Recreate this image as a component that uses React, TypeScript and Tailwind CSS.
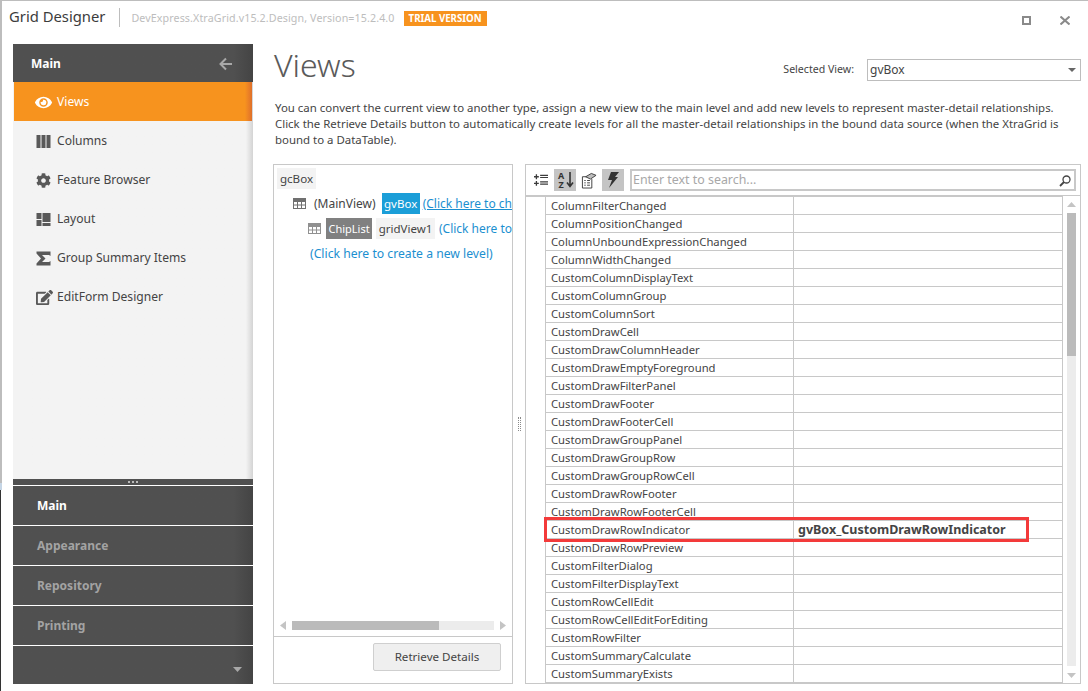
import { FaCog, FaEdit, FaEye } from 'react-icons/fa'

const NAV = ['Views', 'Columns', 'Feature Browser', 'Layout', 'Group Summary Items', 'EditForm Designer']
const GROUPS = ['Main', 'Appearance', 'Repository', 'Printing']
const EVENTS = [
  'ColumnFilterChanged',
  'ColumnPositionChanged',
  'ColumnUnboundExpressionChanged',
  'ColumnWidthChanged',
  'CustomColumnDisplayText',
  'CustomColumnGroup',
  'CustomColumnSort',
  'CustomDrawCell',
  'CustomDrawColumnHeader',
  'CustomDrawEmptyForeground',
  'CustomDrawFilterPanel',
  'CustomDrawFooter',
  'CustomDrawFooterCell',
  'CustomDrawGroupPanel',
  'CustomDrawGroupRow',
  'CustomDrawGroupRowCell',
  'CustomDrawRowFooter',
  'CustomDrawRowFooterCell',
  'CustomDrawRowIndicator',
  'CustomDrawRowPreview',
  'CustomFilterDialog',
  'CustomFilterDisplayText',
  'CustomRowCellEdit',
  'CustomRowCellEditForEditing',
  'CustomRowFilter',
  'CustomSummaryCalculate',
  'CustomSummaryExists',
]

function NavIcon({ name }: { name: string }) {
  if (name === 'Views') return <FaEye className="h-[17px] w-[17px] text-white" />
  if (name === 'Feature Browser') return <FaCog className="ml-[1px] h-[15px] w-[15px] text-[#595959]" />
  if (name === 'EditForm Designer') return <FaEdit className="ml-[1px] h-[17px] w-[17px] text-[#595959]" />
  if (name === 'Columns')
    return (
      <svg className="ml-[1px]" width="15" height="15" viewBox="0 0 15 15" fill="#595959">
        <rect x="0.5" y="1" width="4" height="13" />
        <rect x="5.5" y="1" width="4" height="13" />
        <rect x="10.5" y="1" width="4" height="13" />
      </svg>
    )
  if (name === 'Layout')
    return (
      <svg className="ml-[1px]" width="15" height="15" viewBox="0 0 15 15" fill="#595959">
        <rect x="0.5" y="1" width="5" height="6" />
        <rect x="0.5" y="8" width="5" height="6" />
        <rect x="6.5" y="1" width="8" height="9" />
        <rect x="6.5" y="11" width="8" height="3" />
      </svg>
    )
  return (
    <svg className="ml-[1px]" width="15" height="15" viewBox="0 0 15 15" fill="#595959">
      <path d="M0.5 0.5H14.5V5L13 4H6L9.5 7.5L6 11H13L14.5 10V14.5H0.5V12.5L5 7.5L0.5 2.5Z" />
    </svg>
  )
}

function GridIcon({ className }: { className?: string }) {
  return (
    <svg className={className} width="13" height="11" viewBox="0 0 13 11" fill="none" stroke="currentColor">
      <rect x="0.5" y="0.5" width="12" height="10" fill="#fff" />
      <path d="M0.5 3.5H12.5M0.5 7H12.5M4.5 0.5V10.5M8.5 0.5V10.5" />
      <rect x="0" y="0" width="13" height="3" fill="currentColor" stroke="none" />
    </svg>
  )
}

function Sidebar() {
  return (
    <aside className="flex h-[640px] w-[240px] shrink-0 flex-col">
      <div className="flex h-[38px] items-center justify-between bg-[#505050] bg-gradient-to-r from-[#505050] from-[92%] to-[#444444] pl-[18px] pr-[20px] pt-[1px]">
        <span className="text-[12px] font-bold text-white">Main</span>
        <svg width="14" height="14" viewBox="0 0 14 14" fill="none" stroke="#a8a8a8" strokeWidth="2">
          <path d="M13 7H2M7 1.5L1.5 7L7 12.5" />
        </svg>
      </div>
      <div className="flex flex-1 flex-col bg-[#f3f3f3] bg-gradient-to-r from-[#f3f3f3] from-[97%] to-[#d4d4d4] px-[1px]">
        {NAV.map((n) => (
          <div
            key={n}
            className={
              n === 'Views'
                ? 'flex h-[39px] items-center bg-[#f7931e] bg-gradient-to-r from-[#f7931e] from-[97%] to-[#df6f2a] pl-[21px] pt-[1px] text-[12.1px] text-white'
                : 'flex h-[39px] items-center pl-[21px] pt-[1px] text-[12.1px] text-[#444444]'
            }
          >
            <span className="flex w-[22px] items-center">
              <NavIcon name={n} />
            </span>
            {n}
          </div>
        ))}
      </div>
      <div className="flex h-[6px] items-center justify-center gap-[2px] bg-[#505050]">
        <span className="h-[2px] w-[2px] bg-[#bbbbbb]" />
        <span className="h-[2px] w-[2px] bg-[#bbbbbb]" />
        <span className="h-[2px] w-[2px] bg-[#bbbbbb]" />
      </div>
      {GROUPS.map((g, i) => (
        <div
          key={g}
          className="flex h-[40px] items-center border-t border-white bg-[#505050] bg-gradient-to-r from-[#505050] from-[92%] to-[#444444] pl-[24px]"
        >
          <span className={i === 0 ? 'text-[12px] font-bold text-white' : 'text-[12px] font-bold text-[#a3a3a3]'}>{g}</span>
        </div>
      ))}
      <div className="flex h-[39px] items-center justify-end border-t border-white bg-[#505050] bg-gradient-to-r from-[#505050] from-[92%] to-[#444444] pr-[11px] pt-[8px]">
        <svg width="9" height="5" viewBox="0 0 9 5" fill="#a8a8a8">
          <path d="M0 0H9L4.5 5Z" />
        </svg>
      </div>
    </aside>
  )
}

function LevelTree() {
  return (
    <div className="flex w-[240px] shrink-0 flex-col border border-[#c8c8c8] bg-white">
      <div className="flex flex-1 flex-col gap-[4px] overflow-hidden pl-[3px] pt-[3px] text-[12px] text-[#444444]">
        <div className="flex h-[21px] items-center">
          <span className="w-[39px] bg-[#f3f3f3] text-center text-[11.6px] leading-[21px]">gcBox</span>
        </div>
        <div className="flex h-[21px] items-center whitespace-nowrap pl-[16px]">
          <GridIcon className="mr-[8px] shrink-0 text-[#707070]" />
          <span>(MainView)</span>
          <span className="ml-[6px] w-[39px] bg-[#1b9ed8] text-center text-[11.5px] leading-[21px] text-white">gvBox</span>
          <span className="ml-[3px] text-[#1b8fd0] underline">(Click here to ch</span>
        </div>
        <div className="flex h-[21px] items-center whitespace-nowrap pl-[31px]">
          <GridIcon className="mr-[5px] shrink-0 text-[#909090]" />
          <span className="w-[47px] bg-[#808080] text-center text-[11px] leading-[21px] text-white">ChipList</span>
          <span className="ml-[4px] w-[60px] bg-[#f3f3f3] text-center text-[11.5px] leading-[21px]">gridView1</span>
          <span className="ml-[4px] text-[#1b8fd0]">(Click here to</span>
        </div>
        <div className="mt-[1px] flex h-[21px] items-center pl-[33px] text-[12.2px] text-[#1b8fd0]">(Click here to create a new level)</div>
      </div>
      <div className="flex h-[21px] items-center px-[6px]">
        <svg width="6" height="9" viewBox="0 0 6 9" fill="#c4c4c4">
          <path d="M6 0V9L0 4.5Z" />
        </svg>
        <div className="mx-[6px] h-[9px] flex-1 bg-[#ececec]">
          <div className="h-full w-[147px] bg-[#bbbbbb]" />
        </div>
        <svg width="6" height="9" viewBox="0 0 6 9" fill="#c4c4c4">
          <path d="M0 0V9L6 4.5Z" />
        </svg>
      </div>
      <div className="flex h-[47px] items-start justify-end border-t border-[#c8c8c8] pr-[11px] pt-[6px]">
        <button className="h-[28px] w-[128px] rounded-[2px] border border-[#cfcfcf] bg-[#efefef] text-[11.6px] text-[#444444]">
          Retrieve Details
        </button>
      </div>
    </div>
  )
}

function Toolbar() {
  return (
    <div className="flex h-[31px] shrink-0 items-center border-b border-[#c8c8c8] pl-[8px] pr-[4px]">
      <svg width="14" height="14" viewBox="0 0 16 14" fill="#3c3c3c">
        <path d="M0 2.5H2V0.5H3.5V2.5H5.5V4H3.5V6H2V4H0ZM0 10H2V8H3.5V10H5.5V11.5H3.5V13.5H2V11.5H0ZM7 1H16V2.3H7ZM7 3.5H16V4.8H7ZM7 8.5H16V9.8H7ZM7 11H16V12.3H7Z" />
      </svg>
      <div className="ml-[6px] flex h-[22px] w-[22px] items-center justify-center bg-[#c4c4c4]">
        <span className="flex w-[9px] flex-col text-center text-[9px] font-bold leading-[9px] text-[#333333]">
          <span>A</span>
          <span>Z</span>
        </span>
        <svg width="8" height="16" viewBox="0 0 8 16" fill="none" stroke="#333333" strokeWidth="1.6">
          <path d="M4 0V14M1 10.5L4 14.5L7 10.5" />
        </svg>
      </div>
      <svg className="ml-[5px]" width="16" height="17" viewBox="0 0 17 17" fill="none" stroke="#3c3c3c">
        <path d="M1.5 4.5H6M11.5 7V16.5H1.5V4.5" />
        <path d="M3.5 8.5H5M6.5 8.5H9.5M3.5 11H5M6.5 11H9.5M3.5 13.5H5M6.5 13.5H9.5" />
        <path d="M5 4.5L11 1L16 3L10 7Z" fill="#bdbdbd" />
      </svg>
      <div className="ml-[5px] flex h-[22px] w-[22px] items-center justify-center bg-[#c4c4c4]">
        <svg width="12" height="16" viewBox="0 0 12 16" fill="#333333">
          <path d="M4 0H12L8 5H11L2 16L5 8H1Z" />
        </svg>
      </div>
      <div className="ml-[6px] flex h-[22px] flex-1 items-center justify-between border-2 border-[#c8c8c8] pl-[1px] pr-[3px] pt-[1px] text-[12.4px] text-[#a8a8a8]">
        Enter text to search...
        <svg width="12" height="12" viewBox="0 0 12 12" fill="none" stroke="#444444" strokeWidth="1.3">
          <circle cx="7.5" cy="4.5" r="3.5" />
          <path d="M5 7L1 11" strokeWidth="1.8" />
        </svg>
      </div>
    </div>
  )
}

function EventGrid() {
  return (
    <div className="relative flex w-[556px] shrink-0 flex-col border border-[#c8c8c8] bg-white">
      <Toolbar />
      <div className="flex min-h-0 flex-1">
        <div className="flex-1 border-t border-[#c8c8c8] pl-[19px]">
          {EVENTS.map((e) => (
            <div key={e} className="flex h-[18px] border-b border-[#c8c8c8] text-[11.25px] leading-[17px] text-[#444444]">
              <div className="w-[249px] shrink-0 border-x border-[#c8c8c8] pl-[5px]">{e}</div>
              <div className="flex-1 pl-[4px] text-[12.5px] font-bold">{e === 'CustomDrawRowIndicator' ? 'gvBox_CustomDrawRowIndicator' : ''}</div>
            </div>
          ))}
        </div>
        <div className="flex w-[18px] shrink-0 flex-col items-center border-l border-[#c8c8c8] pb-[5px] pt-[6px]">
          <svg width="9" height="5" viewBox="0 0 9 5" fill="#c4c4c4">
            <path d="M0 5H9L4.5 0Z" />
          </svg>
          <div className="mb-[7px] mt-[6px] w-[9px] flex-1 bg-[#ececec]">
            <div className="h-[143px] w-full bg-[#bbbbbb]" />
          </div>
          <svg width="9" height="5" viewBox="0 0 9 5" fill="#c4c4c4">
            <path d="M0 0H9L4.5 5Z" />
          </svg>
        </div>
      </div>
      {/* red callout over the selected row */}
      <div className="absolute left-[18px] top-[352px] h-[25px] w-[485px] border-[3px] border-[#f33a3a]" />
    </div>
  )
}

export default function App() {
  return (
    <div className="flex h-[691px] w-[1088px] overflow-hidden bg-white" style={{ fontFamily: '"Noto Sans", "Liberation Sans", sans-serif' }}>
      {/* window edge, the dark part is whatever sits behind the dialog */}
      <div className="flex w-[2px] shrink-0 flex-col">
        <div className="h-[483px] bg-[#bdbdbd]" />
        <div className="h-[7px] bg-[#c5d5e5]" />
        <div className="w-[1px] flex-1 bg-[#333333]" />
      </div>
      <div className="flex min-w-0 flex-1 flex-col border-t border-[#bdbdbd]">
        <header className="flex h-[35px] shrink-0 items-center pl-[7px] pr-[18px]">
          <span className="mb-[4px] text-[14.8px] text-[#3c3c3c]">Grid Designer</span>
          <span className="mb-[2px] ml-[14px] h-[19px] w-[1px] bg-[#bdbdbd]" />
          <span className="ml-[11px] text-[10.7px] tracking-[0.1px] text-[#bdbdbd]">DevExpress.XtraGrid.v15.2.Design, Version=15.2.4.0</span>
          <span className="ml-[9px] bg-[#f7931e] px-[5px] text-[9.7px] font-bold leading-[15px] text-white">TRIAL VERSION</span>
          <span className="ml-auto mt-[4px] h-[9px] w-[9px] border-2 border-[#8a8a8a]" />
          <svg className="ml-[29px] mt-[4px]" width="10" height="9" viewBox="0 0 10 9" fill="none" stroke="#8a8a8a" strokeWidth="2">
            <path d="M0.5 0.5L9.5 8.5M9.5 0.5L0.5 8.5" />
          </svg>
        </header>
        <div className="flex pl-[11px] pt-[8px]">
          <Sidebar />
          <main className="ml-[20px] flex h-[640px] w-[808px] flex-col">
            <div className="flex h-[56px] shrink-0 items-start justify-between pl-[1px] pt-[1px]">
              <h1 className="text-[32px] font-light leading-[40px] text-[#5a5a5a]">Views</h1>
              <div className="flex items-center pt-[14px] text-[10.6px] text-[#444444]">
                <span>Selected View:</span>
                <div className="ml-[13px] flex h-[22px] w-[214px] items-center justify-between border border-[#bdbdbd] pl-[2px] pr-[4px] text-[12px]">
                  gvBox
                  <svg width="8" height="4" viewBox="0 0 8 4" fill="#666666">
                    <path d="M0 0H8L4 4Z" />
                  </svg>
                </div>
              </div>
            </div>
            <p className="h-[64px] shrink-0 pl-[2px] text-[11.43px] leading-[16px] text-[#444444]">
              You can convert the current view to another type, assign a new view to the main level and add new levels to represent master-detail relationships. Click the Retrieve Details button to automatically create levels for all the master-detail relationships in the bound data source (when the XtraGrid is bound to a DataTable).
            </p>
            <div className="flex min-h-0 flex-1">
              <LevelTree />
              <div className="flex w-[12px] shrink-0 items-center justify-center">
                <span className="h-[14px] w-[3px] border-x border-dotted border-[#8a8a8a]" />
              </div>
              <EventGrid />
            </div>
          </main>
        </div>
      </div>
    </div>
  )
}
